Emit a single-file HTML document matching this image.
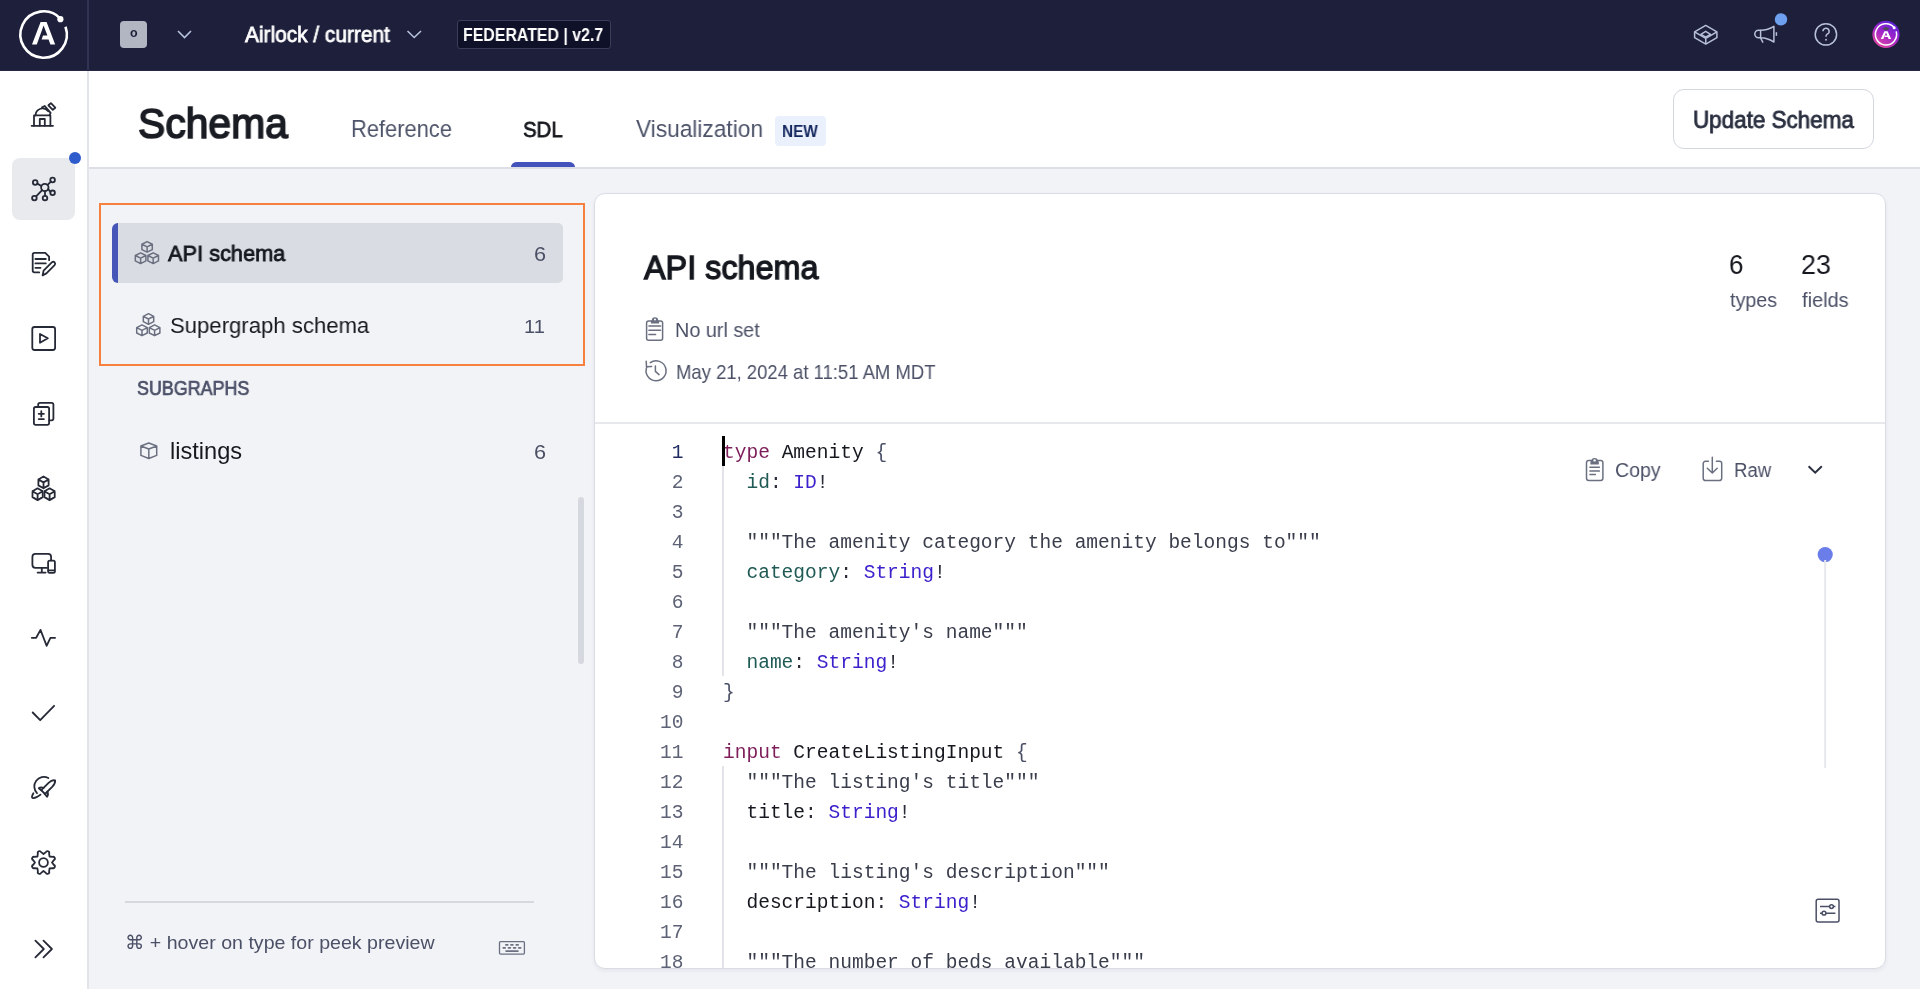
<!DOCTYPE html>
<html><head><meta charset="utf-8"><title>Schema - SDL</title><style>
*{box-sizing:border-box;margin:0;padding:0}
html,body{width:1920px;height:989px;overflow:hidden;background:#f2f3f7;font-family:'Liberation Sans',sans-serif}
.t{position:absolute;white-space:pre;line-height:1;transform-origin:0 0;will-change:transform}
.b{position:absolute}
.cl{position:absolute;will-change:transform;left:723px;font-family:'Liberation Mono',monospace;font-size:19.55px;line-height:1;white-space:pre;color:#2a2d38}
.ln{position:absolute;will-change:transform;left:600px;width:83.5px;text-align:right;font-family:'Liberation Mono',monospace;font-size:19.55px;line-height:1;white-space:pre;color:#5d6275}
.kw{color:#7d1d59}.fd{color:#1f5a55}.ty{color:#3c22cc}.nm{color:#16181f}.br{color:#4b5066}.ds{color:#3a3e4c}.pu{color:#2a2d38}
svg{position:absolute;overflow:visible}
</style></head><body>
<div class="b" style="left:0;top:0;width:1920px;height:71px;background:#1d1f3b;border-bottom:1px solid #262946"></div>
<div class="b" style="left:87px;top:0;width:1.8px;height:70px;background:#2f3250"></div>
<div class="b" style="left:0;top:71px;width:89px;height:918px;background:#ffffff;border-right:2px solid #e1e4e9"></div>
<div class="b" style="left:89px;top:71px;width:1831px;height:98px;background:#ffffff;border-bottom:2px solid #dcdfe5"></div>
<div class="b" style="left:12px;top:158px;width:63px;height:62px;background:#e8eaee;border-radius:8px"></div>
<div class="b" style="left:69px;top:152px;width:12px;height:12px;background:#2f5ccc;border-radius:50%"></div>
<svg style="left:0;top:0" width="90" height="70" viewBox="0 0 90 70">
<path d="M65.5 26.8 A23.2 23.2 0 1 1 60.65 18.77" fill="none" stroke="#fff" stroke-width="2.6"/>
<circle cx="60.4" cy="19.2" r="3.1" fill="#fff"/>
<path d="M32 44.4 L40.6 22 L46.6 22 L55.2 44.4 L50.4 44.4 L48.6 39.4 L41.6 39.4 L43 35.6 L47.4 35.6 L43.6 25.6 L36.8 44.4 Z" fill="#fff"/>
</svg>
<div class="b" style="left:120px;top:21px;width:27px;height:27px;background:#b2b6c3;border-radius:4px"></div>
<div class="t" style="left:129.8px;top:27.4px;font-size:12.5px;font-weight:700;color:#1e2039">o</div>
<svg style="left:0;top:0" width="440" height="70" viewBox="0 0 440 70">
<path d="M178 31 L184.5 37.5 L191 31" fill="none" stroke="#b8c2dc" stroke-width="1.6"/>
<path d="M407.5 31 L414.2 37.5 L421 31" fill="none" stroke="#b8c2dc" stroke-width="1.6"/>
</svg>
<div class="b" style="left:457px;top:19.5px;width:154px;height:29px;background:#0f1128;border:1px solid #3a3d5a;border-radius:3px"></div>
<div class="t" style="left:244.6px;top:24.3px;font-size:21.22px;font-weight:400;color:#ffffff;transform:scaleX(0.9824);-webkit-text-stroke-width:0.76px;">Airlock / current</div>
<div class="t" style="left:463.0px;top:26.8px;font-size:17.51px;font-weight:700;color:#ffffff;transform:scaleX(0.9085);">FEDERATED | v2.7</div>
<svg style="left:1680px;top:0" width="240" height="70" viewBox="1680 0 240 70">
<g fill="none" stroke="#b8c0d8" stroke-width="1.5" stroke-linejoin="round">
<path d="M1705.7 25.4 L1716.9 31.8 L1716.9 37.6 L1705.8 44.1 L1694.6 37.6 L1694.6 31.8 Z"/>
<path d="M1695 32.2 L1705.8 38.4 L1716.5 32.2 M1705.8 38.4 L1705.8 43.8"/>
<path d="M1705.7 31.3 L1710.5 34.3 L1705.7 37.2 L1700.9 34.3 Z"/>
<path d="M1760.6 30.2 Q1768 30 1773.9 26.3 L1773.9 42.1 Q1768 38 1760.6 37.8 Z"/>
<path d="M1760.6 30.2 L1758.6 30.2 A3.8 3.8 0 0 0 1758.6 37.8 L1760.6 37.8"/>
<path d="M1760.6 37.8 L1763 42.6"/>
<path d="M1776.4 32.2 L1776.4 35.8"/>
<circle cx="1825.9" cy="34.4" r="10.7"/>
<path d="M1823 31.3 A3.05 3.05 0 1 1 1827.2 34.1 Q1826 34.9 1826 36.7"/>
</g>
<circle cx="1826" cy="39.7" r="0.95" fill="#b8c0d8"/>
<circle cx="1781" cy="19.4" r="6.2" fill="#6fa0f0"/>
<defs><linearGradient id="av" x1="0.8" y1="0" x2="0.2" y2="1"><stop offset="0" stop-color="#5324d8"/><stop offset="0.45" stop-color="#9a22cc"/><stop offset="1" stop-color="#ea4a9c"/></linearGradient></defs>
<circle cx="1886" cy="34.4" r="13.6" fill="url(#av)"/>
<path d="M1896.16 31.39 A10.6 10.6 0 1 1 1894.18 27.66" fill="none" stroke="#fff" stroke-width="1.5"/>
<circle cx="1894.18" cy="27.66" r="1.5" fill="#fff"/>
<path d="M1880.8 38.9 L1884.4 31.2 L1887.6 31.2 L1891.1 38.9 L1888.6 38.9 L1887.9 37 L1884.6 37 L1885.2 35.4 L1887.3 35.4 L1886 32.6 L1883.3 38.9 Z" fill="#fff"/>
<path d="M1882.2 28.8 L1886 26.9 L1889.8 28.8 L1886 30.6 Z" fill="#4a4a52"/>
</svg>
<div class="t" style="left:137.5px;top:102.4px;font-size:43.31px;font-weight:400;color:#1b1d24;transform:scaleX(0.9434);-webkit-text-stroke-width:1.65px;">Schema</div>
<div class="t" style="left:350.5px;top:116.6px;font-size:24.13px;font-weight:400;color:#4d5368;transform:scaleX(0.9065);">Reference</div>
<div class="t" style="left:523.0px;top:117.6px;font-size:22.67px;font-weight:400;color:#16181f;transform:scaleX(0.9);-webkit-text-stroke-width:0.82px;">SDL</div>
<div class="b" style="left:511px;top:162.3px;width:64px;height:4.8px;background:#4353bb;border-radius:6px 6px 0 0/5px 5px 0 0"></div>
<div class="t" style="left:635.5px;top:117.7px;font-size:23.69px;font-weight:400;color:#4d5368;transform:scaleX(0.958);">Visualization</div>
<div class="b" style="left:774.5px;top:116px;width:51.5px;height:30px;background:#ebf1fc;border-radius:4px"></div>
<div class="t" style="left:781.7px;top:122.7px;font-size:17.01px;font-weight:700;color:#14275e;transform:scaleX(0.9051);">NEW</div>
<div class="b" style="left:1672.5px;top:89.3px;width:201.5px;height:59.5px;background:#fff;border:1.8px solid #d3d7df;border-radius:11px"></div>
<div class="t" style="left:1692.5px;top:108.7px;font-size:23.69px;font-weight:400;color:#2b3040;transform:scaleX(0.9467);-webkit-text-stroke-width:0.85px;">Update Schema</div>
<div class="b" style="left:99px;top:203px;width:486px;height:163px;border:2px solid #f8803f"></div>
<div class="b" style="left:112px;top:223px;width:451px;height:60px;background:#d9dce2;border-radius:6px 5px 5px 6px;border-left:6px solid #4556b8"></div>
<div class="t" style="left:168.3px;top:242.2px;font-size:22.97px;font-weight:400;color:#16181f;transform:scaleX(0.9476);-webkit-text-stroke-width:0.83px;">API schema</div>
<div class="t" style="left:533.6px;top:244.5px;font-size:19.34px;font-weight:400;color:#4b5066;transform:scaleX(1.1222);">6</div>
<div class="t" style="left:169.7px;top:314.0px;font-size:22.97px;font-weight:400;color:#16181f;transform:scaleX(0.9631);">Supergraph schema</div>
<div class="t" style="left:524.0px;top:316.6px;font-size:19.05px;font-weight:400;color:#4b5066;transform:scaleX(1.0556);">11</div>
<div class="t" style="left:136.7px;top:379.0px;font-size:19.48px;font-weight:400;color:#4b5068;transform:scaleX(0.919);-webkit-text-stroke-width:0.7px;">SUBGRAPHS</div>
<div class="t" style="left:169.7px;top:439.9px;font-size:23.6px;font-weight:400;color:#16181f;transform:scaleX(0.9943);">listings</div>
<div class="t" style="left:533.6px;top:442.8px;font-size:19.34px;font-weight:400;color:#4b5066;transform:scaleX(1.1222);">6</div>
<svg style="left:0;top:0" width="600" height="989" viewBox="0 0 600 989">
<g fill="none" stroke="#6b7081" stroke-width="1.5" stroke-linejoin="round">
<path d="M147.10 241.60 L152.29 244.25 L152.29 249.55 L147.10 252.20 L141.91 249.55 L141.91 244.25 Z M141.91 244.25 L147.10 246.90 L152.29 244.25 M147.10 246.90 L147.10 252.20"/><path d="M140.60 252.80 L145.89 255.50 L145.89 260.90 L140.60 263.60 L135.31 260.90 L135.31 255.50 Z M135.31 255.50 L140.60 258.20 L145.89 255.50 M140.60 258.20 L140.60 263.60"/><path d="M153.20 252.80 L158.49 255.50 L158.49 260.90 L153.20 263.60 L147.91 260.90 L147.91 255.50 Z M147.91 255.50 L153.20 258.20 L158.49 255.50 M153.20 258.20 L153.20 263.60"/>
<path d="M148.50 313.70 L153.69 316.35 L153.69 321.65 L148.50 324.30 L143.31 321.65 L143.31 316.35 Z M143.31 316.35 L148.50 319.00 L153.69 316.35 M148.50 319.00 L148.50 324.30"/><path d="M142.00 324.90 L147.29 327.60 L147.29 333.00 L142.00 335.70 L136.71 333.00 L136.71 327.60 Z M136.71 327.60 L142.00 330.30 L147.29 327.60 M142.00 330.30 L142.00 335.70"/><path d="M154.60 324.90 L159.89 327.60 L159.89 333.00 L154.60 335.70 L149.31 333.00 L149.31 327.60 Z M149.31 327.60 L154.60 330.30 L159.89 327.60 M154.60 330.30 L154.60 335.70"/>
<path d="M148.8 443 L156.7 446 L156.7 455.4 L148.8 458.5 L140.9 455.4 L140.9 446 Z M140.9 446 L148.8 449 L156.7 446 M148.8 449 L148.8 458.5"/>
</g>
</svg>
<div class="b" style="left:578px;top:497px;width:6px;height:167px;background:#d5d8de;border-radius:3px"></div>
<div class="b" style="left:124.5px;top:901px;width:409px;height:2px;background:#d5d8de"></div>
<div class="t" style="left:124.6px;top:933.1px;font-size:19.18px;font-weight:400;color:#4b5066;transform:scaleX(1.0216);">⌘ + hover on type for peek preview</div>
<svg style="left:0;top:0" width="600" height="989" viewBox="0 0 600 989">
<g fill="none" stroke="#6b7081" stroke-width="1.3">
<rect x="499.5" y="941.7" width="24.9" height="12.4" rx="1"/>
</g>
<g fill="#6b7081">
<rect x="505" y="944.1" width="3.6" height="1.7" rx="0.8"/><rect x="510.1" y="944.1" width="3.6" height="1.7" rx="0.8"/><rect x="515.4" y="944.1" width="3.6" height="1.7" rx="0.8"/>
<rect x="502.4" y="947.1" width="3.6" height="1.7" rx="0.8"/><rect x="507.6" y="947.1" width="3.6" height="1.7" rx="0.8"/><rect x="512.8" y="947.1" width="3.6" height="1.7" rx="0.8"/><rect x="517.9" y="947.1" width="3.6" height="1.7" rx="0.8"/>
<rect x="505.2" y="950.2" width="13.6" height="1.7" rx="0.8"/>
</g>
</svg>
<div class="b" style="left:594px;top:193px;width:1292px;height:776px;background:#fff;border:1px solid #d9dce3;border-radius:11px;box-shadow:0 2px 4px rgba(30,35,60,0.06)"></div>
<div class="b" style="left:595px;top:422px;width:1290px;height:2px;background:#e6e8ec"></div>
<div class="t" style="left:644.4px;top:250.6px;font-size:33.87px;font-weight:400;color:#16181f;transform:scaleX(0.9554);-webkit-text-stroke-width:1.35px;">API schema</div>
<div class="t" style="left:1729.0px;top:250.0px;font-size:28.22px;font-weight:400;color:#16181f;transform:scaleX(0.9214);">6</div>
<div class="t" style="left:1800.7px;top:250.0px;font-size:28.22px;font-weight:400;color:#16181f;transform:scaleX(0.9517);">23</div>
<div class="t" style="left:1729.6px;top:289.7px;font-size:20.29px;font-weight:400;color:#4b5066;transform:scaleX(0.9719);">types</div>
<div class="t" style="left:1801.7px;top:289.7px;font-size:20.29px;font-weight:400;color:#4b5066;transform:scaleX(0.983);">fields</div>
<div class="t" style="left:674.7px;top:320.7px;font-size:19.91px;font-weight:400;color:#4b5066;transform:scaleX(0.994);">No url set</div>
<div class="t" style="left:675.7px;top:361.8px;font-size:20.49px;font-weight:400;color:#4b5066;transform:scaleX(0.9018);">May 21, 2024 at 11:51 AM MDT</div>
<div class="t" style="left:1615.0px;top:459.7px;font-size:20.35px;font-weight:400;color:#4b5066;transform:scaleX(0.9609);">Copy</div>
<div class="t" style="left:1733.7px;top:459.7px;font-size:20.35px;font-weight:400;color:#4b5066;transform:scaleX(0.9128);">Raw</div>
<svg style="left:590px;top:300px" width="1300" height="680" viewBox="590 300 1300 680">
<g fill="none" stroke="#6b7081" stroke-width="1.5" stroke-linejoin="round" stroke-linecap="round">
<rect x="646.6" y="320.9" width="16" height="19.3" rx="2"/>
<path d="M648.9 326 L660.6 326 M648.9 330.2 L660.6 330.2 M648.9 334.6 L655.6 334.6"/>
<path d="M646.8 367 A10 10 0 1 0 650.3 362.6"/>
<path d="M646.2 361.2 L646.5 366.8 L651.6 366.4"/>
<path d="M655.4 366 L655.4 371.4 L659 374.6"/>
<rect x="1586.5" y="460.6" width="16.4" height="19.8" rx="2.2"/>
<path d="M1589.9 467.3 L1599.4 467.3 M1589.9 470.9 L1599.4 470.9 M1589.9 474.4 L1595.4 474.4"/>
<path d="M1708.4 461.3 L1705.4 461.3 A2.2 2.2 0 0 0 1703.2 463.5 L1703.2 478.3 A2.2 2.2 0 0 0 1705.4 480.5 L1719.5 480.5 A2.2 2.2 0 0 0 1721.7 478.3 L1721.7 463.5 A2.2 2.2 0 0 0 1719.5 461.3 L1716.4 461.3"/>
<path d="M1712.3 457.2 L1712.3 472.8 M1707.3 468.2 L1712.3 473 L1717.2 468.2"/>
</g>
<g fill="#6b7081">
<path d="M650.9 323.6 L650.9 321.2 Q650.9 320.4 651.8 320.4 A3.2 3.2 0 0 1 658.2 320.4 Q659.1 320.4 659.1 321.2 L659.1 323.6 Z"/>
<path d="M1590.4 464.4 L1590.4 462.1 Q1590.4 461.1 1591.4 461.1 A3.2 3.2 0 0 1 1597.8 461.1 Q1598.8 461.1 1598.8 462.1 L1598.8 464.4 Z"/>
</g>
<circle cx="655" cy="319.6" r="1" fill="#fff"/>
<circle cx="1594.6" cy="460.4" r="1.2" fill="#fff"/>
<path d="M1808.6 466.2 L1815.2 472.6 L1821.8 466.2" fill="none" stroke="#2b3040" stroke-width="2"/>
<circle cx="1825.2" cy="554.6" r="7.6" fill="#6a7de8"/>
<rect x="1824.2" y="560" width="2" height="208" fill="#e6e8ec"/>
<g fill="none" stroke="#4b5066" stroke-width="1.5">
<rect x="1816.2" y="899.2" width="22.8" height="22.8" rx="2"/>
<path d="M1820 906.6 L1829.6 906.6 M1833.4 906.6 L1835.4 906.6 M1820 913.2 L1822 913.2 M1825.8 913.2 L1835.4 913.2"/>
<circle cx="1831.5" cy="906.6" r="1.9"/><circle cx="1824" cy="913.2" r="1.9"/>
</g>
</svg>
<div class="b" style="left:595px;top:424px;width:1290px;height:544px;overflow:hidden;border-radius:0 0 10px 10px">
<div style="position:absolute;left:-595px;top:-424px;width:1920px;height:989px">
<div class="b" style="left:722.2px;top:466px;width:2px;height:210px;background:#e2e4ea"></div>
<div class="b" style="left:722.2px;top:766px;width:2px;height:260px;background:#e2e4ea"></div>
<div class="ln" style="top:443.5px;color:#1f2a5e">1</div>
<div class="cl" style="top:443.5px"><span class="kw">type</span><span class="pu"> </span><span class="nm">Amenity</span><span class="pu"> </span><span class="br">{</span></div>
<div class="ln" style="top:473.5px;color:#5d6275">2</div>
<div class="cl" style="top:473.5px"><span class="pu">  </span><span class="fd">id</span><span class="pu">: </span><span class="ty">ID</span><span class="pu">!</span></div>
<div class="ln" style="top:503.5px;color:#5d6275">3</div>
<div class="ln" style="top:533.5px;color:#5d6275">4</div>
<div class="cl" style="top:533.5px"><span class="pu">  </span><span class="ds">&quot;&quot;&quot;The amenity category the amenity belongs to&quot;&quot;&quot;</span></div>
<div class="ln" style="top:563.5px;color:#5d6275">5</div>
<div class="cl" style="top:563.5px"><span class="pu">  </span><span class="fd">category</span><span class="pu">: </span><span class="ty">String</span><span class="pu">!</span></div>
<div class="ln" style="top:593.5px;color:#5d6275">6</div>
<div class="ln" style="top:623.5px;color:#5d6275">7</div>
<div class="cl" style="top:623.5px"><span class="pu">  </span><span class="ds">&quot;&quot;&quot;The amenity&#x27;s name&quot;&quot;&quot;</span></div>
<div class="ln" style="top:653.5px;color:#5d6275">8</div>
<div class="cl" style="top:653.5px"><span class="pu">  </span><span class="fd">name</span><span class="pu">: </span><span class="ty">String</span><span class="pu">!</span></div>
<div class="ln" style="top:683.5px;color:#5d6275">9</div>
<div class="cl" style="top:683.5px"><span class="br">}</span></div>
<div class="ln" style="top:713.5px;color:#5d6275">10</div>
<div class="ln" style="top:743.5px;color:#5d6275">11</div>
<div class="cl" style="top:743.5px"><span class="kw">input</span><span class="pu"> </span><span class="nm">CreateListingInput</span><span class="pu"> </span><span class="br">{</span></div>
<div class="ln" style="top:773.5px;color:#5d6275">12</div>
<div class="cl" style="top:773.5px"><span class="pu">  </span><span class="ds">&quot;&quot;&quot;The listing&#x27;s title&quot;&quot;&quot;</span></div>
<div class="ln" style="top:803.5px;color:#5d6275">13</div>
<div class="cl" style="top:803.5px"><span class="pu">  </span><span class="nm">title</span><span class="pu">: </span><span class="ty">String</span><span class="pu">!</span></div>
<div class="ln" style="top:833.5px;color:#5d6275">14</div>
<div class="ln" style="top:863.5px;color:#5d6275">15</div>
<div class="cl" style="top:863.5px"><span class="pu">  </span><span class="ds">&quot;&quot;&quot;The listing&#x27;s description&quot;&quot;&quot;</span></div>
<div class="ln" style="top:893.5px;color:#5d6275">16</div>
<div class="cl" style="top:893.5px"><span class="pu">  </span><span class="nm">description</span><span class="pu">: </span><span class="ty">String</span><span class="pu">!</span></div>
<div class="ln" style="top:923.5px;color:#5d6275">17</div>
<div class="ln" style="top:953.5px;color:#5d6275">18</div>
<div class="cl" style="top:953.5px"><span class="pu">  </span><span class="ds">&quot;&quot;&quot;The number of beds available&quot;&quot;&quot;</span></div>
<div class="b" style="left:722.3px;top:436px;width:3px;height:29.5px;background:#000"></div>
</div></div>
<svg style="left:0;top:70px" width="88" height="919" viewBox="0 70 88 919">
<g fill="none" stroke="#262a37" stroke-width="1.8" stroke-linecap="round" stroke-linejoin="round">
<!-- observatory -->
<path d="M31.6 125.8 L53 125.8"/>
<path d="M34 125.8 L34 115.4 L50.4 115.4 L50.4 125.8"/>
<path d="M39.8 125.8 L39.8 119 L44.8 119 L44.8 125.8"/>
<path d="M35.6 115.4 A7 7 0 0 1 48.2 111.2"/>
<path d="M42 107.4 L44.8 106 L50.6 112.8 L49.6 115.2"/>
<path d="M48.4 105.3 L50.9 103.1 L55.3 107.7 L52.8 109.9 Z"/>
<!-- network -->
<circle cx="44.8" cy="187.5" r="3.7"/>
<circle cx="35.2" cy="182.5" r="2.3"/><circle cx="52.6" cy="180" r="2.3"/><circle cx="52.6" cy="192.8" r="2.3"/>
<circle cx="34.4" cy="198.1" r="2.3"/><circle cx="45" cy="198.1" r="2.3"/>
<path d="M37.3 183.6 L41.4 186 M50.9 181.7 L47.6 184.9 M50.4 192 L48.3 189.1 M36.1 196.4 L42.1 190.2 M45 195.8 L45 191.2"/>
<!-- doc edit -->
<path d="M39.2 272.4 L34.6 272.4 Q32.7 272.4 32.7 270.5 L32.7 254.8 Q32.7 252.9 34.6 252.9 L45.3 252.9 L49.1 256.7 L49.1 260.2"/>
<path d="M35.4 259 L45.8 259 M35.4 263.4 L45.8 263.4 M35.4 267.8 L40.5 267.8"/>
<path d="M42.6 275.4 L43.6 270.6 L51.8 262.4 Q53.4 261.2 54.6 262.4 Q55.8 263.8 54.6 265.2 L46.4 273.4 Z"/>
<!-- play -->
<rect x="32.3" y="327" width="22.8" height="23" rx="2.2"/>
<path d="M40 334 L47.8 338.3 L40 342.8 Z"/>
<!-- doc plus -->
<path d="M38.2 407 L38.2 404.6 Q38.2 402.8 40 402.8 L51.6 402.8 Q53.4 402.8 53.4 404.6 L53.4 418.6 Q53.4 420.4 51.6 420.4 L49.2 420.4"/>
<rect x="33.9" y="407" width="15.2" height="17.9" rx="1.8"/>
<path d="M41.3 411.2 L41.3 416.4 M38.7 413.8 L43.9 413.8 M38.7 419.1 L43.9 419.1"/>
<!-- cubes -->
<path d="M43.50 476.50 L48.61 479.45 L48.61 485.35 L43.50 488.30 L38.39 485.35 L38.39 479.45 Z M38.39 479.45 L43.50 482.40 L48.61 479.45 M43.50 482.40 L43.50 488.30"/><path d="M37.60 488.30 L42.71 491.25 L42.71 497.15 L37.60 500.10 L32.49 497.15 L32.49 491.25 Z M32.49 491.25 L37.60 494.20 L42.71 491.25 M37.60 494.20 L37.60 500.10"/><path d="M49.60 488.30 L54.71 491.25 L54.71 497.15 L49.60 500.10 L44.49 497.15 L44.49 491.25 Z M44.49 491.25 L49.60 494.20 L54.71 491.25 M49.60 494.20 L49.60 500.10"/>
<!-- devices -->
<path d="M47 567.8 L35.4 567.8 Q32.4 567.8 32.4 564.8 L32.4 556.9 Q32.4 553.9 35.4 553.9 L48.1 553.9 Q51.1 553.9 51.1 556.9 L51.1 560.4"/>
<path d="M41.8 567.8 L41.8 572.6 M37.6 572.6 L45.6 572.6"/>
<rect x="48.1" y="560.6" width="6.8" height="12.2" rx="1.6"/>
<path d="M48.6 570.3 L54.4 570.3"/>
<!-- pulse -->
<path d="M31.8 637.8 L36.2 637.8 L40.5 629.9 L46.6 645.8 L50.4 637.8 L55.1 637.8"/>
<!-- check -->
<path d="M32.7 712.5 L40.2 720.2 L54.1 705.8"/>
<!-- rocket -->
<path d="M48.3 778 A9.6 9.6 0 0 0 37 793.2"/>
<path d="M33.4 793.2 Q31 797.5 32.6 798 Q36 798.4 40.5 794.6"/>
<path d="M55.1 780.4 Q55.6 783.2 52.4 786.6 L45 794 L41.2 790.2 L48.6 782.8 Q52 779.6 55.1 780.4 Z"/>
<path d="M41.6 790.6 L38.8 788.2 Q40.6 786.6 43.6 787.8 M44.6 793.8 L47 796.8 Q48.8 794.8 47.4 791.6"/>
<!-- gear -->
<path d="M52.00 862.50 L53.87 864.90 A1.75 1.75 0 0 1 52.53 868.13 L49.51 868.51 L49.13 871.53 A1.75 1.75 0 0 1 45.90 872.87 L43.50 871.00 L41.10 872.87 A1.75 1.75 0 0 1 37.87 871.53 L37.49 868.51 L34.47 868.13 A1.75 1.75 0 0 1 33.13 864.90 L35.00 862.50 L33.13 860.10 A1.75 1.75 0 0 1 34.47 856.87 L37.49 856.49 L37.87 853.47 A1.75 1.75 0 0 1 41.10 852.13 L43.50 854.00 L45.90 852.13 A1.75 1.75 0 0 1 49.13 853.47 L49.51 856.49 L52.53 856.87 A1.75 1.75 0 0 1 53.87 860.10 Z"/>
<circle cx="43.5" cy="862.5" r="4.4"/>
<!-- chevrons -->
<path d="M35.4 940.7 L43.8 949 L35.4 957.4 M43.5 940.7 L51.9 949 L43.5 957.4"/>
</g>
</svg>
</body></html>
